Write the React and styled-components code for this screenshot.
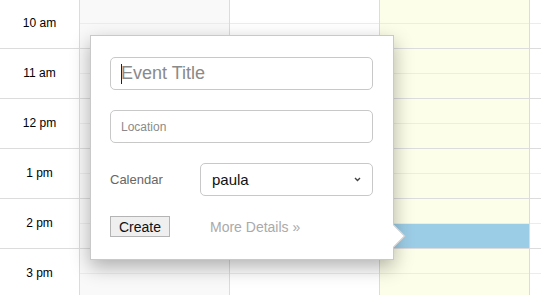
import styled, { createGlobalStyle } from "styled-components";

const GlobalStyle = createGlobalStyle`
  html, body { margin: 0; padding: 0; background: #fff; }
  body { font-family: "Liberation Sans", Arial, sans-serif; }
  * { box-sizing: border-box; }
`;

const Page = styled.div`
  position: relative;
  width: 541px;
  height: 295px;
  overflow: hidden;
`;

const Grid = styled.div`
  display: grid;
  grid-template-columns: 80px 150px 150px 150px 1fr;
  margin-top: -1px;
`;

const TimeColumn = styled.div`
  border-right: 1px solid #dcdcdc;
`;

const HourLabel = styled.div`
  height: 50px;
  border-bottom: 1px solid #dcdcdc;
  display: flex;
  align-items: center;
  justify-content: center;
  padding-bottom: 2px;
  font-size: 12px;
  color: #000;
`;

const DayColumn = styled.div`
  position: relative;
  background: ${(p) => p.bg || "#fff"};
  border-right: 1px solid #dcdcdc;
  &:last-child { border-right: none; }
`;

const HalfSlot = styled.div`
  height: 25px;
  border-bottom: 1px solid ${(p) => (p.hour ? "#dcdcdc" : "#ececec")};
`;

const Event = styled.div`
  position: absolute;
  left: 0;
  right: 0;
  top: 225px;
  height: 24px;
  background: #9ccde6;
`;

const Popover = styled.div`
  position: absolute;
  left: 90px;
  top: 35px;
  width: 304px;
  height: 225px;
  background: #fff;
  border: 1px solid #c9c9c9;
  box-shadow: 0 7px 18px rgba(0, 0, 0, 0.3);
  padding: 21px 20px 0 19px;
  display: flex;
  flex-direction: column;
  gap: 20px;
  z-index: 2;
`;

const Arrow = styled.div`
  position: absolute;
  right: -9px;
  top: 192px;
  width: 16px;
  height: 16px;
  background: #fff;
  border-top: 1px solid #c9c9c9;
  border-right: 1px solid #c9c9c9;
  transform: rotate(45deg);
`;

const Field = styled.div`
  position: relative;
`;

const Input = styled.input`
  display: block;
  width: 263px;
  height: 33px;
  border: 1px solid #c8c8c8;
  border-radius: 5px;
  padding: 0 10px;
  font-family: inherit;
  font-size: ${(p) => (p.big ? "18px" : "12px")};
  color: #222;
  outline: none;
  &::placeholder { color: #8a8a8a; }
`;

const Caret = styled.span`
  position: absolute;
  left: 11px;
  top: 7px;
  width: 1px;
  height: 20px;
  background: #222;
`;

const Row = styled.div`
  display: flex;
  align-items: center;
`;

const Label = styled.span`
  width: 90px;
  font-size: 13px;
  color: #666;
`;

const Select = styled.div`
  width: 173px;
  height: 33px;
  border: 1px solid #c8c8c8;
  border-radius: 5px;
  padding: 0 11px 0 11px;
  display: flex;
  align-items: center;
  justify-content: space-between;
  font-size: 15px;
  color: #111;
`;

const Button = styled.button`
  width: 60px;
  height: 21px;
  padding: 0;
  border: 1px solid #b4b4b4;
  background: #efefef;
  font-family: inherit;
  font-size: 14px;
  color: #111;
`;

const MoreLink = styled.span`
  margin-left: 40px;
  font-size: 14px;
  color: #aaa;
`;

const hours = ["10 am", "11 am", "12 pm", "1 pm", "2 pm", "3 pm"];
const days = ["#f9f9f9", "#fff", "#fdfee9", "#fff"];

export default function App() {
  return (
    <Page>
      <GlobalStyle />
      <Grid>
        <TimeColumn>
          {hours.map((h) => (
            <HourLabel key={h}>{h}</HourLabel>
          ))}
        </TimeColumn>
        {days.map((bg, i) => (
          <DayColumn key={i} bg={bg}>
            {hours.map((h) => (
              <div key={h}>
                <HalfSlot />
                <HalfSlot hour />
              </div>
            ))}
            {i === 2 && <Event />}
          </DayColumn>
        ))}
      </Grid>
      <Popover>
        <Arrow />
        <Field>
          <Input big placeholder="Event Title" />
          <Caret />
        </Field>
        <Input placeholder="Location" />
        <Row>
          <Label>Calendar</Label>
          <Select>
            <span>paula</span>
            <svg width="7" height="5" viewBox="0 0 7 5">
              <polyline points="1,1 3.5,3.5 6,1" fill="none" stroke="#444" strokeWidth="1.4" />
            </svg>
          </Select>
        </Row>
        <Row>
          <Button>Create</Button>
          <MoreLink>More Details »</MoreLink>
        </Row>
      </Popover>
    </Page>
  );
}
